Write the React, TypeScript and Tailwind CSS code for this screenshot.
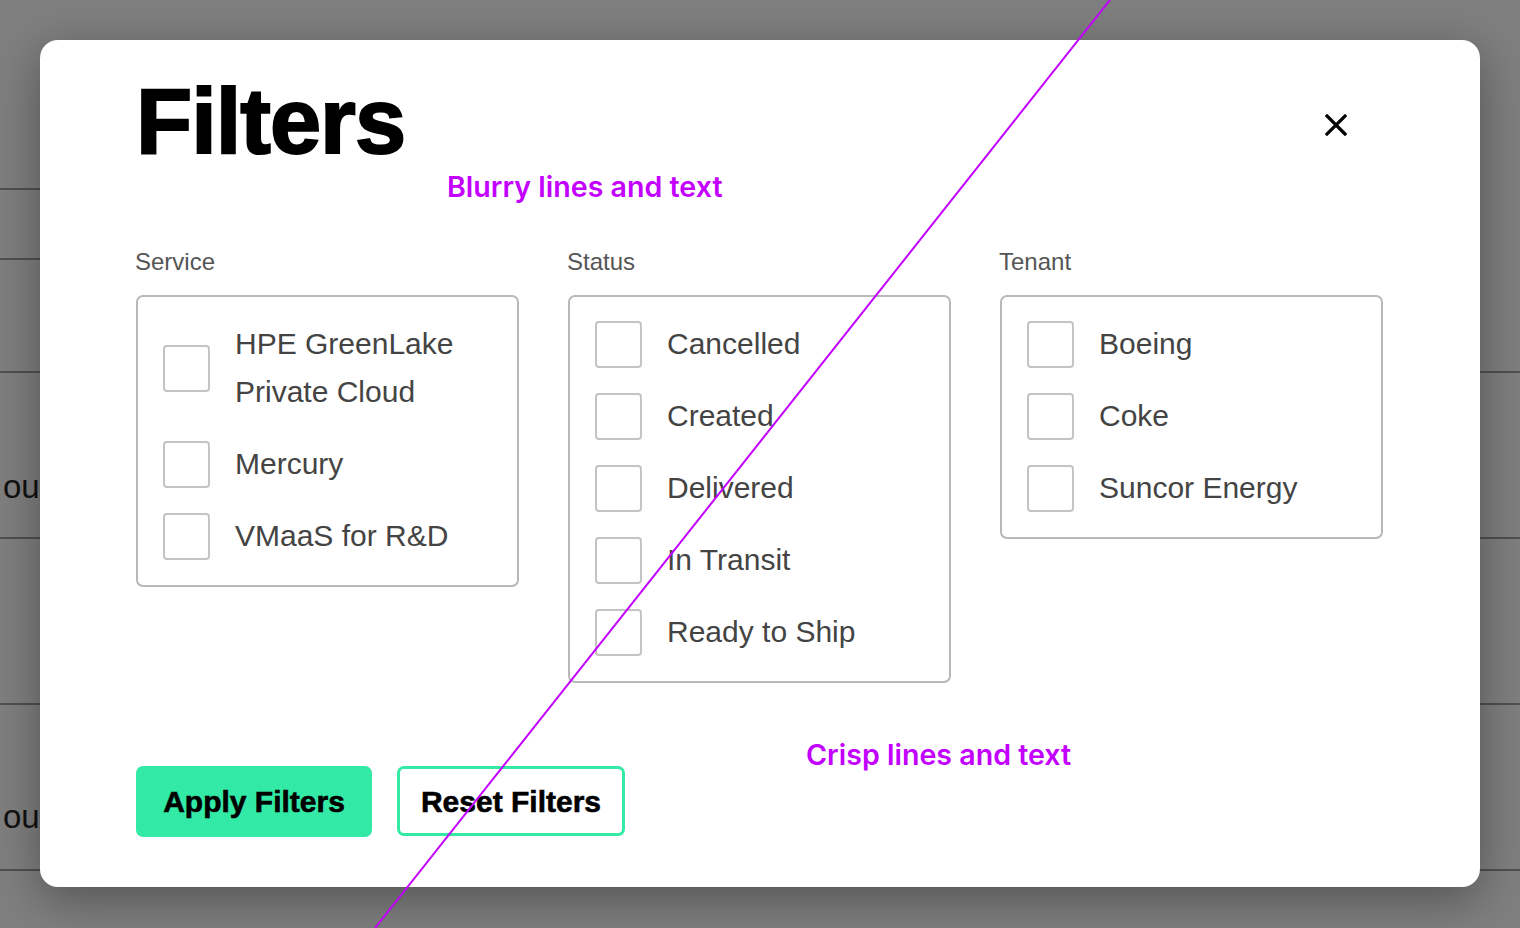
const service = [["HPE GreenLake", "Private Cloud"], ["Mercury"], ["VMaaS for R&D"]];
const status = [["Cancelled"], ["Created"], ["Delivered"], ["In Transit"], ["Ready to Ship"]];
const tenant = [["Boeing"], ["Coke"], ["Suncor Energy"]];

function Group({ title, items }: { title: string; items: string[][] }) {
	return (
		<div className="flex flex-col">
			<p className="text-[24px] leading-[32px] text-[#555] mb-[17px] -ml-px">{title}</p>
			<div className="border-2 border-[#b8b8b8] rounded-[7px] pl-[25px] pr-4 pt-[23px] pb-[25px] flex flex-col gap-[24px]">
				{items.map((lines) => (
					<label key={lines[0]} className="flex items-center gap-[25px]">
						<span className="w-[47px] h-[47px] shrink-0 border-2 border-[#c4c4c4] rounded-[4px] bg-white" />
						<span className="text-[30px] leading-[48px] text-[#444]">
							{lines.map((l) => (
								<span key={l} className="block">{l}</span>
							))}
						</span>
					</label>
				))}
			</div>
		</div>
	);
}

export default function App() {
	return (
		<div className="relative w-[1520px] h-[928px] overflow-hidden bg-[#7f7f7f] font-['Liberation_Sans',Arial,sans-serif]">
			{/* page behind the overlay */}
			<div className="flex flex-col">
				<div className="h-[188px]" />
				<div className="w-[40px] h-[70px] border-t-2 border-[#505050]" />
				<div className="w-[40px] h-[113px] border-t-2 border-[#505050]" />
				<div className="h-[166px] border-t-2 border-[#505050] flex items-end pb-[34px]">
					<span className="text-[33px] leading-none text-[#111] ml-[3px]">oud</span>
				</div>
				<div className="h-[166px] border-t-2 border-[#505050]" />
				<div className="h-[166px] border-t-2 border-[#505050] flex items-end pb-[36px]">
					<span className="text-[33px] leading-none text-[#111] ml-[3px]">oud</span>
				</div>
				<div className="h-[60px] border-t-2 border-[#505050]" />
			</div>

			{/* modal */}
			<div className="absolute inset-0 p-10">
				<div className="h-[847px] bg-white rounded-[18px] shadow-[0_12px_48px_rgba(0,0,0,0.35)] pl-[96px] pr-[97px] pt-[35px] flex flex-col">
					<div className="flex items-center justify-between h-[92px]">
						<h1 className="text-[92px] leading-none font-bold text-black tracking-[-1px] [-webkit-text-stroke:2px_black]">Filters</h1>
						<button className="mr-[36px] mt-[8px]">
							<svg width="22" height="22" viewBox="0 0 22 22">
								<path d="M2 2L20 20M20 2L2 20" stroke="black" strokeWidth="3.2" strokeLinecap="square" />
							</svg>
						</button>
					</div>

					<div className="grid grid-cols-3 gap-[49px] items-start mt-[79px]">
						<Group title="Service" items={service} />
						<Group title="Status" items={status} />
						<Group title="Tenant" items={tenant} />
					</div>

					<div className="flex gap-[25px] mt-[83px]">
						<button className="w-[236px] h-[71px] rounded-[7px] bg-[#32e9a6] text-[30px] font-bold text-black [-webkit-text-stroke:0.6px_black]">Apply Filters</button>
						<button className="w-[228px] h-[70px] rounded-[7px] border-[3px] border-[#32e9a6] bg-white text-[30px] font-bold text-black [-webkit-text-stroke:0.6px_black]">Reset Filters</button>
					</div>
				</div>
			</div>

			{/* annotation overlay */}
			<svg className="absolute inset-0 pointer-events-none" width="1520" height="928">
				<line x1="1110" y1="0" x2="375" y2="928" stroke="#c300ff" strokeWidth="2" />
			</svg>
			<span className="absolute left-[447px] top-[173px] text-[28.6px] leading-none font-semibold text-[#c300ff] font-['Inter',sans-serif]">Blurry lines and text</span>
			<span className="absolute left-[806px] top-[741px] text-[28.6px] leading-none font-semibold text-[#c300ff] font-['Inter',sans-serif]">Crisp lines and text</span>
		</div>
	);
}
